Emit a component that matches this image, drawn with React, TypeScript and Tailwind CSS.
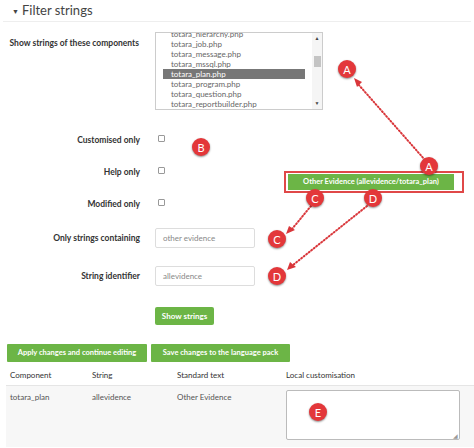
import React from 'react';

const components = [
  'totara_hierarchy.php',
  'totara_job.php',
  'totara_message.php',
  'totara_mssql.php',
  'totara_plan.php',
  'totara_program.php',
  'totara_question.php',
  'totara_reportbuilder.php',
];

const Callout: React.FC<{ letter: string; x: number; y: number }> = ({ letter, x, y }) => (
  <div
    className="absolute w-[18px] h-[18px] rounded-full bg-[#e3373a] text-white flex items-center justify-center text-[11px] leading-none shadow-[0_1px_2px_rgba(0,0,0,0.45)]"
    style={{ left: x - 9, top: y - 9 }}
  >
    {letter}
  </div>
);

const FormRow: React.FC<{ label: string; className?: string; children: React.ReactNode }> = ({
  label,
  className = '',
  children,
}) => (
  <div className={`flex items-center ${className}`}>
    <div className="w-[140px] text-right font-bold text-[8.5px] text-[#333] shrink-0">{label}</div>
    <div className="ml-[15px] flex items-center">{children}</div>
  </div>
);

const Checkbox = () => (
  <div className="w-[7px] h-[7px] border border-[#999] rounded-[1px] bg-white -mt-[4px] ml-[3px]" />
);

const App: React.FC = () => {
  return (
    <div className="relative w-[474px] h-[448px] bg-white overflow-hidden font-['Lato',sans-serif] text-[#333]">
      {/* Header */}
      <div className="h-[22px] flex items-center pl-[9px] border-b border-[#eee] mx-[3px]">
        <span className="text-[7px] text-[#444] mr-[3px] mt-[1px]">▼</span>
        <span className="text-[13px] text-[#444]">Filter strings</span>
      </div>

      {/* Components select */}
      <div className="flex items-start mt-[10px]">
        <div className="w-[140px] text-right font-bold text-[8.5px] text-[#333] pt-[5px] pr-[1px]">
          Show strings of these components
        </div>
        <div className="ml-[15px] w-[168px] h-[78px] border border-[#ccc] bg-white flex overflow-hidden">
          <div className="flex-1 pl-[7px] pr-[7px] -mt-[4px]">
            {components.map((c) => (
              <div
                key={c}
                className={`h-[10px] leading-[10px] text-[8px] pl-[8px] whitespace-nowrap ${
                  c === 'totara_plan.php' ? 'bg-[#777] text-white' : 'text-[#666]'
                }`}
              >
                {c}
              </div>
            ))}
          </div>
          <div className="w-[10px] bg-[#f5f5f5] flex flex-col items-center justify-between py-[3px]">
            <span className="text-[5px] text-[#444] leading-none">▲</span>
            <div className="w-[7px] h-[11px] bg-[#c4c4c4] mt-[15px]" />
            <div className="flex-1" />
            <span className="text-[5px] text-[#444] leading-none">▼</span>
          </div>
        </div>
      </div>

      {/* Checkboxes */}
      <FormRow label="Customised only" className="h-[32px] mt-[14px]">
        <Checkbox />
      </FormRow>
      <FormRow label="Help only" className="h-[32px]">
        <Checkbox />
      </FormRow>
      <FormRow label="Modified only" className="h-[32px]">
        <Checkbox />
      </FormRow>

      {/* Text inputs */}
      <FormRow label="Only strings containing" className="h-[20px] mt-[8px]">
        <div className="w-[100px] h-[20px] border border-[#ddd] rounded-[2px] flex items-center pl-[7px] text-[8px] text-[#888]">
          other evidence
        </div>
      </FormRow>
      <FormRow label="String identifier" className="h-[20px] mt-[18px]">
        <div className="w-[100px] h-[20px] border border-[#ddd] rounded-[2px] flex items-center pl-[7px] text-[8px] text-[#888]">
          allevidence
        </div>
      </FormRow>

      <div className="flex ml-[155px] mt-[21px]">
        <button className="w-[59px] h-[18px] bg-[#6cb546] text-white font-bold text-[8px] rounded-[2px]">
          Show strings
        </button>
      </div>

      {/* Action buttons */}
      <div className="flex gap-[4px] ml-[7px] mt-[19px]">
        <button className="w-[140px] h-[18px] bg-[#6cb546] text-white font-bold text-[7.5px] rounded-[1px]">
          Apply changes and continue editing
        </button>
        <button className="w-[139px] h-[18px] bg-[#6cb546] text-white font-bold text-[7.5px] rounded-[1px]">
          Save changes to the language pack
        </button>
      </div>

      {/* Table */}
      <div className="ml-[6px] mt-[3px]">
        <div className="flex h-[21px] items-center text-[8px] text-[#333] border-b border-[#e5e5e5]">
          <div className="w-[86px] pl-[4px]">Component</div>
          <div className="w-[85px]">String</div>
          <div className="w-[109px]">Standard text</div>
          <div>Local customisation</div>
        </div>
        <div className="flex bg-[#f7f7f7] h-[61px] text-[8px] text-[#555]">
          <div className="w-[86px] pl-[4px] pt-[5px]">totara_plan</div>
          <div className="w-[85px] pt-[5px]">allevidence</div>
          <div className="w-[109px] pt-[5px]">Other Evidence</div>
          <div className="pt-[4px]">
            <div className="relative w-[174px] h-[50px] bg-white border border-[#bbb] rounded-[2px]">
              <span className="absolute right-[1px] bottom-0 text-[6px] text-[#999] leading-none">◢</span>
            </div>
          </div>
        </div>
      </div>

      {/* Annotation overlay */}
      <div className="absolute left-[284px] top-[171px] w-[180px] h-[22px] border-[2px] border-[#e04848] bg-white">
        <div className="mt-[1px] ml-[2px] w-[166px] h-[16px] bg-[#6cb546] text-white font-bold text-[7.5px] flex items-center justify-center">
          Other Evidence (allevidence/totara_plan)
        </div>
      </div>

      <svg className="absolute left-0 top-0" width={474} height={448}>
        <g stroke="#d9363a" strokeWidth={2} strokeDasharray="1 2.2" strokeLinecap="round" fill="none">
          <line x1={425} y1={160} x2={358} y2={84} />
          <line x1={311} y1={206} x2={292} y2={229} />
          <line x1={367} y1={206} x2={293} y2={265} />
        </g>
        <g fill="#d9363a">
          <polygon points="354,78 362,82 357,87" />
          <polygon points="286,234 289,226 295,230" />
          <polygon points="287,270 290,262 296,267" />
        </g>
      </svg>

      <Callout letter="A" x={347} y={69} />
      <Callout letter="A" x={429} y={166} />
      <Callout letter="B" x={201} y={147} />
      <Callout letter="C" x={315} y={198} />
      <Callout letter="D" x={373} y={198} />
      <Callout letter="C" x={277} y={239} />
      <Callout letter="D" x={277} y={276} />
      <Callout letter="E" x={318} y={412} />
    </div>
  );
};

export default App;
